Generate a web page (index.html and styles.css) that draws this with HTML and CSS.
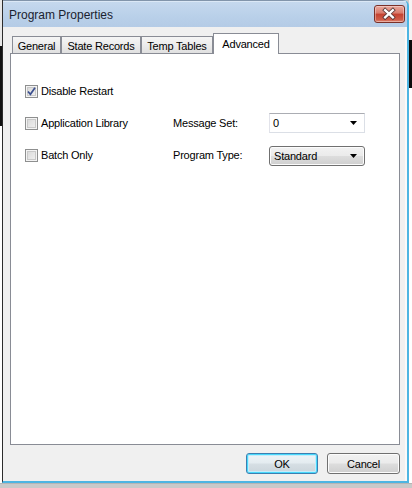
FILE: index.html
```
<!DOCTYPE html>
<html>
<head>
<meta charset="utf-8">
<title>Program Properties</title>
<link rel="stylesheet" href="styles.css">
</head>
<body>
<div class="screen">
  <div class="left-bg"><div class="lb-top"></div><div class="lb-dark"></div></div>
  <div class="window">
    <div class="titlebar">
      <span class="title">Program Properties</span>
      <button class="close" aria-label="Close">
        <svg width="31" height="18" viewBox="0 0 31 18">
          <path d="M11.5 5 L19.5 12.5 M19.5 5 L11.5 12.5" stroke="#5a3a38" stroke-width="4.2" stroke-linecap="square" fill="none"/>
          <path d="M11.5 5 L19.5 12.5 M19.5 5 L11.5 12.5" stroke="#ffffff" stroke-width="2.4" stroke-linecap="square" fill="none"/>
        </svg>
      </button>
    </div>
    <div class="client">
      <div class="tabs">
        <div class="tab t-general">General</div>
        <div class="tab t-state">State Records</div>
        <div class="tab t-temp">Temp Tables</div>
        <div class="tab selected t-adv">Advanced</div>
      </div>
      <div class="panel">
        <div class="grid">
          <label class="check">
            <span class="box checked">
              <svg width="11" height="11" viewBox="0 0 11 11"><path d="M2 5.5 L4.4 8.3 L9 1.8" stroke="#3b4f8f" stroke-width="1.7" fill="none"/></svg>
            </span>
            <span>Disable Restart</span>
          </label>
          <span></span><span></span>

          <label class="check">
            <span class="box"></span>
            <span>Application Library</span>
          </label>
          <span class="field-label">Message Set:</span>
          <div class="combo edit">
            <span>0</span>
            <svg class="arrow" width="7" height="4" viewBox="0 0 7 4"><path d="M0 0 H7 L3.5 4 Z" fill="#000"/></svg>
          </div>

          <label class="check">
            <span class="box"></span>
            <span>Batch Only</span>
          </label>
          <span class="field-label">Program Type:</span>
          <div class="combo list">
            <span>Standard</span>
            <svg class="arrow" width="7" height="4" viewBox="0 0 7 4"><path d="M0 0 H7 L3.5 4 Z" fill="#000"/></svg>
          </div>
        </div>
      </div>
      <div class="buttons">
        <button class="btn default b-ok">OK</button>
        <button class="btn b-cancel">Cancel</button>
      </div>
    </div>
  </div>
  <div class="right-bg"><div class="rb-top"></div><div class="rb-dark"></div></div>
</div>
<div class="bottom-bg"></div>
</body>
</html>
```
FILE: styles.css
```
* { box-sizing: border-box; }
html, body { margin: 0; padding: 0; }
body {
  width: 412px;
  height: 488px;
  overflow: hidden;
  background: #cbcbcb;
  font-family: "Liberation Sans", Arial, sans-serif;
  font-size: 11px;
  letter-spacing: -0.2px;
  color: #000;
}
.screen { display: flex; height: 483px; }
.left-bg { width: 2px; display: flex; flex-direction: column; background: #ffffff; }
.lb-top { height: 46px; background: #e8e8e8; }
.lb-dark { height: 80px; background: #111; }
.right-bg { width: 3px; display: flex; flex-direction: column; background: #ffffff; }
.rb-top { height: 40px; background: #f4f4f4; }
.rb-dark { height: 48px; background: #0d0d0d; }
.bottom-bg { height: 5px; background: #c9c9c9; border-top: 1px solid #b5b5b5; }

.window {
  width: 407px;
  height: 483px;
  display: flex;
  flex-direction: column;
  border-left: 1px solid #2c2c2c;
  border-right: 2px solid #4db5e2;
  border-bottom: 2px solid #4db5e2;
  border-top-right-radius: 6px;
  background: #f0f0f0;
  overflow: hidden;
}
.titlebar {
  height: 27px;
  flex: none;
  display: flex;
  justify-content: space-between;
  align-items: flex-start;
  padding: 4px 2px 0 6px;
  border-top: 1px solid #8295ab;
  background: linear-gradient(#c6d9ee, #b9d0e9 60%, #b4cbe6);
  box-shadow: inset 0 1px 0 #dbe8f6;
}
.title {
  margin-top: 3px;
  font-size: 12px;
  line-height: 14px;
  letter-spacing: 0;
  color: #1a2230;
}
.close {
  width: 31px;
  height: 18px;
  padding: 0;
  margin: 0;
  border: 1px solid #7a3028;
  border-radius: 3px;
  background: linear-gradient(#eaa89d, #d87a6b 45%, #c4412f 50%, #cf5c48 85%, #e08a78);
  box-shadow: inset 0 0 0 1px rgba(255,255,255,0.35);
  display: flex;
  align-items: center;
  justify-content: center;
}
.close svg { display: block; margin-left: -1px; margin-top: -1px; }

.client {
  flex: 1;
  display: flex;
  flex-direction: column;
  padding: 6px 5px 0 7px;
  border-right: 2px solid #f9f9f9;
}
.tabs {
  height: 20px;
  display: flex;
  align-items: flex-end;
  padding-left: 2px;
}
.tab {
  height: 17px;
  display: flex;
  align-items: center;
  justify-content: center;
  border: 1px solid #898c95;
  border-bottom: none;
  background: linear-gradient(#f5f5f5, #ececec 50%, #e0e0e0);
  white-space: nowrap;
  padding-top: 1px;
}
.t-general { width: 49px; }
.t-state { width: 80px; }
.t-temp { width: 72px; }
.t-adv { width: 66px; }
.tab.selected {
  height: 21px;
  background: #ffffff;
  margin-bottom: -1px;
  position: relative;
  z-index: 1;
  padding-top: 0;
  padding-bottom: 1px;
}
.panel {
  width: 390px;
  height: 392px;
  border: 1px solid #898c95;
  background: #ffffff;
  padding: 27px 0 0 14px;
}
.grid {
  display: grid;
  grid-template-columns: 148px 96px 96px;
  grid-auto-rows: 20px;
  row-gap: 12px;
  align-items: center;
}
.check { display: flex; align-items: center; gap: 3px; }
.box {
  width: 13px;
  height: 13px;
  border: 1px solid #8e8f8f;
  background: linear-gradient(135deg, #d6d6d6, #f4f4f4);
  box-shadow: inset 0 0 0 1px #f4f4f4, inset 0 0 0 2px #c9c9c9;
  display: flex;
  align-items: center;
  justify-content: center;
}
.box.checked svg { display: block; }
.field-label { white-space: nowrap; }
.combo {
  width: 96px;
  height: 20px;
  display: flex;
  align-items: center;
  justify-content: space-between;
}
.combo.edit {
  border: 1px solid #dbdfe6;
  border-top-color: #abadb3;
  border-left-color: #e2e3ea;
  background: #fff;
  padding: 0 7px 0 3px;
}
.combo.list {
  border: 1px solid #707070;
  border-radius: 3px;
  background: linear-gradient(#f2f2f2, #ebebeb 48%, #dddddd 52%, #cfcfcf);
  box-shadow: inset 0 0 0 1px #fcfcfc;
  padding: 0 7px 0 4px;
  margin-top: 1px;
}
.arrow { display: block; }
.buttons {
  width: 390px;
  display: flex;
  justify-content: flex-end;
  gap: 9px;
  margin-top: 8px;
}
.btn {
  height: 21px;
  margin: 0;
  padding: 0;
  font-family: "Liberation Sans", Arial, sans-serif;
  font-size: 11px;
  letter-spacing: -0.2px;
  color: #000;
  border: 1px solid #707070;
  border-radius: 3px;
  background: linear-gradient(#f2f2f2, #ebebeb 48%, #dddddd 52%, #cfcfcf);
  box-shadow: inset 0 0 0 1px #fcfcfc;
}
.b-ok { width: 72px; }
.b-cancel { width: 73px; }
.btn.default {
  border-color: #3c7fb1;
  box-shadow: inset 0 0 0 1px #48d8fb, inset 0 0 0 2px #c4ecfb;
  background: linear-gradient(#eef4f7, #e4ecf0 48%, #d6dfe4 52%, #cbd5db);
}
```
